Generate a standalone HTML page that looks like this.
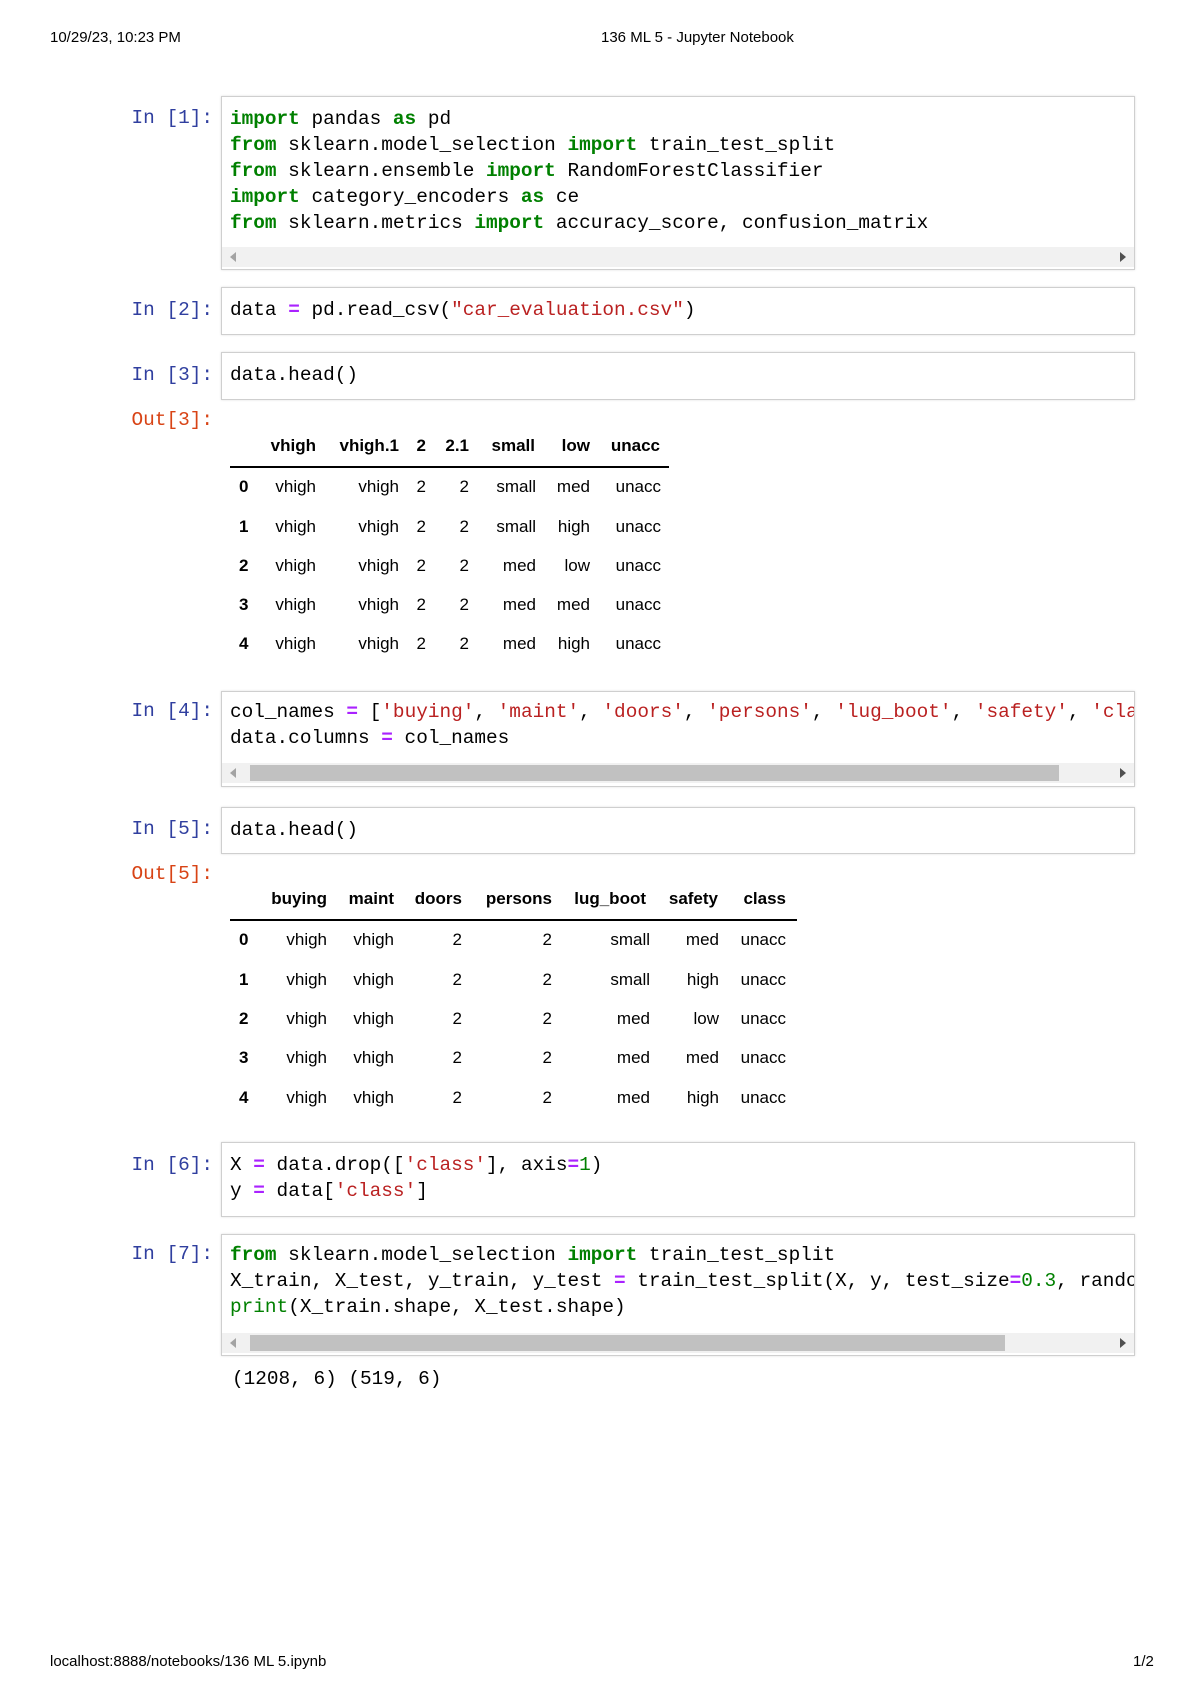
<!DOCTYPE html>
<html><head><meta charset="utf-8"><style>
body{margin:0;width:1200px;height:1698px;background:#fff;position:relative;overflow:hidden;font-family:"Liberation Sans",sans-serif;}
.a{position:absolute;white-space:pre;}
.hd{font-size:15px;color:#000;}
.box{position:absolute;left:221px;width:912px;border:1px solid #cfcfcf;background:#fff;overflow:hidden;box-shadow:0 0 2px #ddd;}
.code{font-family:"Liberation Mono",monospace;font-size:19.4px;color:#000;line-height:26px;}
.pr{position:absolute;right:987px;font-family:"Liberation Mono",monospace;font-size:19.4px;line-height:26px;color:#303F9F;white-space:pre;}
.out{color:#D84315;}
.k{color:#008000;font-weight:bold;}
.s{color:#BA2121;}
.o{color:#AA22FF;font-weight:bold;}
.n{color:#008000;}
.sb{position:absolute;left:0;right:0;height:20px;background:#f1f1f1;}
.th{position:absolute;top:2px;height:16px;background:#c1c1c1;left:28px;}
.al{position:absolute;left:8px;top:5px;width:0;height:0;border-top:5px solid transparent;border-bottom:5px solid transparent;border-right:6px solid #a3a3a3;}
.ar{position:absolute;right:8px;top:5px;width:0;height:0;border-top:5px solid transparent;border-bottom:5px solid transparent;border-left:6px solid #505050;}
.t{position:absolute;font-size:17px;color:#000;white-space:pre;transform:translate(-100%,-50%);}
.tb{font-weight:bold;}
.tl{position:absolute;font-size:17px;white-space:pre;transform:translateY(-50%);font-weight:bold;}
.rule{position:absolute;height:2px;background:#000;}
</style></head><body>
<div class="a hd" style="left:50px;top:29px;">10/29/23, 10:23 PM</div>
<div class="a hd" style="left:601px;top:29px;">136 ML 5 - Jupyter Notebook</div>

<!-- Cell 1 -->
<div class="pr" style="top:105px;">In [1]:</div>
<div class="box" style="top:96px;height:172px;">
<div class="a code" style="left:8px;top:9px;"><span class="k">import</span> pandas <span class="k">as</span> pd
<span class="k">from</span> sklearn.model_selection <span class="k">import</span> train_test_split
<span class="k">from</span> sklearn.ensemble <span class="k">import</span> RandomForestClassifier
<span class="k">import</span> category_encoders <span class="k">as</span> ce
<span class="k">from</span> sklearn.metrics <span class="k">import</span> accuracy_score, confusion_matrix</div>
<div class="sb" style="top:150px;"><div class="al"></div><div class="ar"></div></div>
</div>

<!-- Cell 2 -->
<div class="pr" style="top:297px;">In [2]:</div>
<div class="box" style="top:287px;height:46px;">
<div class="a code" style="left:8px;top:9px;">data <span class="o">=</span> pd.read_csv(<span class="s">"car_evaluation.csv"</span>)</div>
</div>

<!-- Cell 3 -->
<div class="pr" style="top:362px;">In [3]:</div>
<div class="box" style="top:352px;height:46px;">
<div class="a code" style="left:8px;top:9px;">data.head()</div>
</div>
<div class="pr out" style="top:407px;">Out[3]:</div>

<!-- Table 1 -->
<div class="t tb" style="left:316px;top:446px;">vhigh</div>
<div class="t tb" style="left:399px;top:446px;">vhigh.1</div>
<div class="t tb" style="left:426px;top:446px;">2</div>
<div class="t tb" style="left:469px;top:446px;">2.1</div>
<div class="t tb" style="left:535px;top:446px;">small</div>
<div class="t tb" style="left:590px;top:446px;">low</div>
<div class="t tb" style="left:660px;top:446px;">unacc</div>
<div class="rule" style="left:230px;width:439px;top:466px;"></div>
<div class="tl" style="left:239px;top:487px;">0</div>
<div class="t" style="left:316px;top:487px;">vhigh</div><div class="t" style="left:399px;top:487px;">vhigh</div><div class="t" style="left:426px;top:487px;">2</div><div class="t" style="left:469px;top:487px;">2</div><div class="t" style="left:536px;top:487px;">small</div><div class="t" style="left:590px;top:487px;">med</div><div class="t" style="left:661px;top:487px;">unacc</div>
<div class="tl" style="left:239px;top:527px;">1</div>
<div class="t" style="left:316px;top:527px;">vhigh</div><div class="t" style="left:399px;top:527px;">vhigh</div><div class="t" style="left:426px;top:527px;">2</div><div class="t" style="left:469px;top:527px;">2</div><div class="t" style="left:536px;top:527px;">small</div><div class="t" style="left:590px;top:527px;">high</div><div class="t" style="left:661px;top:527px;">unacc</div>
<div class="tl" style="left:239px;top:566px;">2</div>
<div class="t" style="left:316px;top:566px;">vhigh</div><div class="t" style="left:399px;top:566px;">vhigh</div><div class="t" style="left:426px;top:566px;">2</div><div class="t" style="left:469px;top:566px;">2</div><div class="t" style="left:536px;top:566px;">med</div><div class="t" style="left:590px;top:566px;">low</div><div class="t" style="left:661px;top:566px;">unacc</div>
<div class="tl" style="left:239px;top:605px;">3</div>
<div class="t" style="left:316px;top:605px;">vhigh</div><div class="t" style="left:399px;top:605px;">vhigh</div><div class="t" style="left:426px;top:605px;">2</div><div class="t" style="left:469px;top:605px;">2</div><div class="t" style="left:536px;top:605px;">med</div><div class="t" style="left:590px;top:605px;">med</div><div class="t" style="left:661px;top:605px;">unacc</div>
<div class="tl" style="left:239px;top:644px;">4</div>
<div class="t" style="left:316px;top:644px;">vhigh</div><div class="t" style="left:399px;top:644px;">vhigh</div><div class="t" style="left:426px;top:644px;">2</div><div class="t" style="left:469px;top:644px;">2</div><div class="t" style="left:536px;top:644px;">med</div><div class="t" style="left:590px;top:644px;">high</div><div class="t" style="left:661px;top:644px;">unacc</div>

<!-- Cell 4 -->
<div class="pr" style="top:698px;">In [4]:</div>
<div class="box" style="top:691px;height:94px;">
<div class="a code" style="left:8px;top:7px;">col_names <span class="o">=</span> [<span class="s">'buying'</span>, <span class="s">'maint'</span>, <span class="s">'doors'</span>, <span class="s">'persons'</span>, <span class="s">'lug_boot'</span>, <span class="s">'safety'</span>, <span class="s">'class'</span>]
data.columns <span class="o">=</span> col_names</div>
<div class="sb" style="top:71px;"><div class="al"></div><div class="th" style="width:809px;"></div><div class="ar"></div></div>
</div>

<!-- Cell 5 -->
<div class="pr" style="top:816px;">In [5]:</div>
<div class="box" style="top:807px;height:45px;">
<div class="a code" style="left:8px;top:9px;">data.head()</div>
</div>
<div class="pr out" style="top:861px;">Out[5]:</div>

<!-- Table 2 -->
<div class="t tb" style="left:327px;top:899px;">buying</div>
<div class="t tb" style="left:394px;top:899px;">maint</div>
<div class="t tb" style="left:462px;top:899px;">doors</div>
<div class="t tb" style="left:552px;top:899px;">persons</div>
<div class="t tb" style="left:646px;top:899px;">lug_boot</div>
<div class="t tb" style="left:718px;top:899px;">safety</div>
<div class="t tb" style="left:786px;top:899px;">class</div>
<div class="rule" style="left:230px;width:567px;top:919px;"></div>
<div class="tl" style="left:239px;top:940px;">0</div>
<div class="t" style="left:327px;top:940px;">vhigh</div><div class="t" style="left:394px;top:940px;">vhigh</div><div class="t" style="left:462px;top:940px;">2</div><div class="t" style="left:552px;top:940px;">2</div><div class="t" style="left:650px;top:940px;">small</div><div class="t" style="left:719px;top:940px;">med</div><div class="t" style="left:786px;top:940px;">unacc</div>
<div class="tl" style="left:239px;top:980px;">1</div>
<div class="t" style="left:327px;top:980px;">vhigh</div><div class="t" style="left:394px;top:980px;">vhigh</div><div class="t" style="left:462px;top:980px;">2</div><div class="t" style="left:552px;top:980px;">2</div><div class="t" style="left:650px;top:980px;">small</div><div class="t" style="left:719px;top:980px;">high</div><div class="t" style="left:786px;top:980px;">unacc</div>
<div class="tl" style="left:239px;top:1019px;">2</div>
<div class="t" style="left:327px;top:1019px;">vhigh</div><div class="t" style="left:394px;top:1019px;">vhigh</div><div class="t" style="left:462px;top:1019px;">2</div><div class="t" style="left:552px;top:1019px;">2</div><div class="t" style="left:650px;top:1019px;">med</div><div class="t" style="left:719px;top:1019px;">low</div><div class="t" style="left:786px;top:1019px;">unacc</div>
<div class="tl" style="left:239px;top:1058px;">3</div>
<div class="t" style="left:327px;top:1058px;">vhigh</div><div class="t" style="left:394px;top:1058px;">vhigh</div><div class="t" style="left:462px;top:1058px;">2</div><div class="t" style="left:552px;top:1058px;">2</div><div class="t" style="left:650px;top:1058px;">med</div><div class="t" style="left:719px;top:1058px;">med</div><div class="t" style="left:786px;top:1058px;">unacc</div>
<div class="tl" style="left:239px;top:1098px;">4</div>
<div class="t" style="left:327px;top:1098px;">vhigh</div><div class="t" style="left:394px;top:1098px;">vhigh</div><div class="t" style="left:462px;top:1098px;">2</div><div class="t" style="left:552px;top:1098px;">2</div><div class="t" style="left:650px;top:1098px;">med</div><div class="t" style="left:719px;top:1098px;">high</div><div class="t" style="left:786px;top:1098px;">unacc</div>

<!-- Cell 6 -->
<div class="pr" style="top:1152px;">In [6]:</div>
<div class="box" style="top:1142px;height:73px;">
<div class="a code" style="left:8px;top:9px;">X <span class="o">=</span> data.drop([<span class="s">'class'</span>], axis<span class="o">=</span><span class="n">1</span>)
y <span class="o">=</span> data[<span class="s">'class'</span>]</div>
</div>

<!-- Cell 7 -->
<div class="pr" style="top:1241px;">In [7]:</div>
<div class="box" style="top:1234px;height:120px;">
<div class="a code" style="left:8px;top:7px;"><span class="k">from</span> sklearn.model_selection <span class="k">import</span> train_test_split
X_train, X_test, y_train, y_test <span class="o">=</span> train_test_split(X, y, test_size<span class="o">=</span><span class="n">0.3</span>, random_state<span class="o">=</span><span class="n">42</span>)
<span class="k" style="font-weight:normal">print</span>(X_train.shape, X_test.shape)</div>
<div class="sb" style="top:98px;"><div class="al"></div><div class="th" style="width:755px;"></div><div class="ar"></div></div>
</div>
<div class="a code" style="left:232px;top:1366px;">(1208, 6) (519, 6)</div>

<div class="a hd" style="left:50px;top:1653px;">localhost:8888/notebooks/136 ML 5.ipynb</div>
<div class="a hd" style="left:1133px;top:1653px;">1/2</div>
</body></html>
